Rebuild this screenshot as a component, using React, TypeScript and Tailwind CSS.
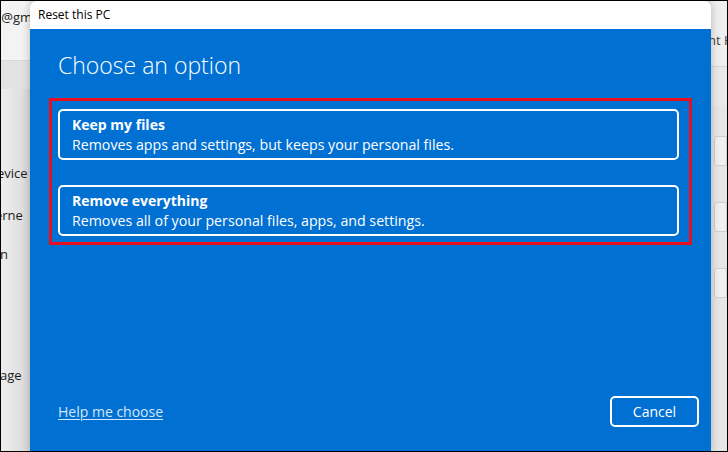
export default function App() {
  const font = { fontFamily: '"Segoe UI", "Open Sans", "Noto Sans", sans-serif' };
  return (
    <div
      className="w-[728px] h-[452px] border border-black bg-[#ececec] flex overflow-hidden"
      style={font}
    >
      {/* Settings window behind, left */}
      <div className="w-[29px] flex flex-col text-[13px] text-[#1b1b1b] bg-gradient-to-r from-[#eeeeee] to-[#d9d9d9]">
        <div className="h-[60px] bg-[#f3f3f3] border-b border-[#d8d8d8] pt-[7px] whitespace-nowrap overflow-hidden">
          <div className="-ml-[3px] text-[#222]">i@gm</div>
        </div>
        <div className="h-[28px] bg-[#e3e3e3]" />
        <div className="flex-1 overflow-hidden whitespace-nowrap">
          <div className="mt-[75px] -ml-[4px]">evice</div>
          <div className="mt-[22px] -ml-[6px]">erne</div>
          <div className="mt-[20px] -ml-[1px]">n</div>
          <div className="mt-[101px] -ml-[1px]">age</div>
        </div>
      </div>

      {/* Dialog */}
      <div className="w-[681px] h-[451px] flex flex-col rounded-t-[7px] overflow-hidden shadow-[0_0_8px_rgba(0,0,0,0.25)] z-10">
        <div className="h-[28px] bg-white flex items-center pl-[8px] text-[12px] text-black shrink-0">
          Reset this PC
        </div>
        <div className="flex-1 bg-[#0170d3] flex flex-col px-[28px] text-white">
          <h1 className="text-[23px] font-light leading-none mt-[25px]">Choose an option</h1>

          <div className="mt-[21px] -mx-[9px] border-[3px] border-[#e8101e] pl-[6px] pr-[10px] pt-[8px] pb-[6px] flex flex-col gap-[25px]">
            <div className="h-[51px] rounded-[5px] border-2 border-white flex flex-col justify-center px-[12px]">
              <div className="text-[14px] font-bold leading-[20px]">Keep my files</div>
              <div className="text-[14.2px] leading-[20px]">Removes apps and settings, but keeps your personal files.</div>
            </div>
            <div className="h-[51px] rounded-[5px] border-2 border-white flex flex-col justify-center px-[12px]">
              <div className="text-[14px] font-bold leading-[20px]">Remove everything</div>
              <div className="text-[14.2px] leading-[20px]">Removes all of your personal files, apps, and settings.</div>
            </div>
          </div>

          <div className="flex-1" />

          <div className="flex items-center justify-between pb-[25px]">
            <a className="text-[14px] text-[#d4e6f7] underline underline-offset-[2px]">Help me choose</a>
            <button className="w-[89px] h-[31px] rounded-[5px] border-2 border-white text-[14px] text-white -mr-[16px]">
              Cancel
            </button>
          </div>
        </div>
      </div>

      {/* Settings window behind, right */}
      <div className="flex-1 flex flex-col text-[13px] text-[#444] bg-[#e6e6e6] overflow-hidden whitespace-nowrap">
        <div className="h-[65px] bg-[#efefef] pt-[30px] -ml-[3px]">nt H</div>
        <div className="h-[40px] bg-[#e9e9e9] border-t border-[#d6d6d6]" />
        <div className="flex-1 flex flex-col gap-[36px] pt-[30px] pl-[3px]">
          <div className="h-[30px] rounded-l-[3px] bg-[#f0f0f0] border border-[#d0d0d0]" />
          <div className="h-[30px] rounded-l-[3px] bg-[#f0f0f0] border border-[#d0d0d0]" />
          <div className="h-[30px] rounded-l-[3px] bg-[#f0f0f0] border border-[#d0d0d0]" />
        </div>
      </div>
    </div>
  );
}
